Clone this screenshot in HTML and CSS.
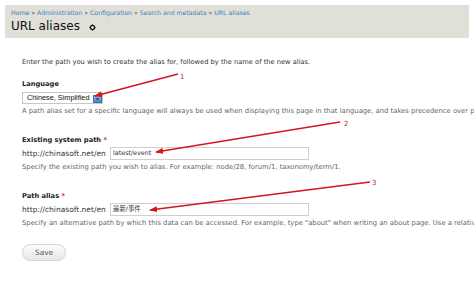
FILE: index.html
```html
<!DOCTYPE html>
<html>
<head>
    <title>URL aliases</title>
    <link rel="stylesheet" href="styles.css">
</head>
<body>
    <div class="page">
        <div class="header">
            <div class="breadcrumb">
                <a href="#">Home</a> » <a href="#">Administration</a> » <a href="#">Configuration</a> » <a href="#">Search and metadata</a> » <a href="#">URL aliases</a>
            </div>
            <h1 class="title">URL aliases
                <svg class="gear" viewBox="0 0 12 12" width="7" height="7">
                    <circle cx="6" cy="6" r="3.5" fill="none" stroke="#111" stroke-width="2.2"/>
                    <g stroke="#111" stroke-width="1.6">
                        <line x1="6" y1="0.8" x2="6" y2="2.4"/>
                        <line x1="6" y1="9.6" x2="6" y2="11.2"/>
                        <line x1="0.8" y1="6" x2="2.4" y2="6"/>
                        <line x1="9.6" y1="6" x2="11.2" y2="6"/>
                    </g>
                </svg>
            </h1>
        </div>

        <div class="content">
            <p class="intro">Enter the path you wish to create the alias for, followed by the name of the new alias.</p>

            <div class="form-item lang-item">
                <label class="label">Language</label>
                <div class="select">
                    <span class="select-text">Chinese, Simplified</span>
                    <span class="select-btn">
                        <svg viewBox="0 0 8 8" width="8" height="8"><polygon points="2,3 6,3 4,5.5" fill="#1a2a40"/></svg>
                    </span>
                </div>
                <div class="description">A path alias set for a specific language will always be used when displaying this page in that language, and takes precedence over path aliases set as neutral.</div>
            </div>

            <div class="form-item">
                <label class="label">Existing system path <span class="required">*</span></label>
                <div class="field-row">
                    <span class="prefix">http://chinasoft.net/en</span>
                    <div class="text-input">latest/event</div>
                </div>
                <div class="description">Specify the existing path you wish to alias. For example: node/28, forum/1, taxonomy/term/1.</div>
            </div>

            <div class="form-item">
                <label class="label">Path alias <span class="required">*</span></label>
                <div class="field-row">
                    <span class="prefix">http://chinasoft.net/en</span>
                    <div class="text-input cjk">最新/事件</div>
                </div>
                <div class="description">Specify an alternative path by which this data can be accessed. For example, type "about" when writing an about page. Use a relative path.</div>
            </div>

            <button class="button">Save</button>
        </div>

        <!-- 标注箭头 -->
        <svg class="annotations" width="474" height="283" viewBox="0 0 474 283">
            <defs>
                <marker id="head" markerWidth="8" markerHeight="6" refX="7" refY="3" orient="auto" markerUnits="userSpaceOnUse">
                    <polygon points="0,0 8,3 0,6" fill="#d4161e"/>
                </marker>
            </defs>
            <g stroke="#d4161e" stroke-width="1.4" marker-end="url(#head)">
                <line x1="178" y1="74" x2="95" y2="96"/>
                <line x1="340" y1="122" x2="156" y2="152"/>
                <line x1="370" y1="182" x2="150" y2="210"/>
            </g>
            <g class="num">
                <text x="180" y="79">1</text>
                <text x="344" y="126">2</text>
                <text x="372" y="185">3</text>
            </g>
        </svg>
    </div>
</body>
</html>
```

FILE: styles.css
```css
body {
    margin: 0;
    font-family: "DejaVu Sans", Verdana, sans-serif;
    background: #fff;
    overflow: hidden;
}

.page {
    position: relative;
    width: 474px;
    height: 283px;
    padding: 5px;
    box-sizing: border-box;
    overflow: hidden;
}

.header {
    background: #e0e0d8;
    padding: 3px 6px 5px;
    height: 33px;
    box-sizing: border-box;
}

.breadcrumb {
    font-size: 6.2px;
    line-height: 9px;
    color: #555;
    white-space: nowrap;
}

.breadcrumb a {
    color: #3d7fbf;
    text-decoration: none;
}

.title {
    margin: 2px 0 0;
    font-size: 12px;
    line-height: 14px;
    font-weight: normal;
    color: #111;
}

.gear {
    vertical-align: -1px;
    margin-left: 5px;
}

.content {
    padding-left: 17px;
    white-space: nowrap;
}

.intro {
    margin: 20px 0 0;
    font-size: 6.7px;
    line-height: 9px;
    color: #333;
}

.form-item {
    margin-top: 20px;
}

.lang-item {
    margin-top: 13px;
}

.label {
    display: block;
    font-size: 6.7px;
    line-height: 9px;
    font-weight: bold;
    color: #222;
}

.required {
    color: #e02020;
}

.select {
    display: flex;
    align-items: center;
    width: 81px;
    height: 12px;
    margin-top: 2.5px;
    border: 1px solid #c8c8c8;
    box-sizing: border-box;
    background: #fff;
}

.select-text {
    flex: 1;
    padding-left: 4px;
    font-family: "Liberation Sans", Arial, sans-serif;
    font-size: 7.3px;
    color: #111;
}

.select-btn {
    display: flex;
    align-items: center;
    justify-content: center;
    width: 9px;
    height: 8px;
    margin-top: 2px;
    background: linear-gradient(#8fb8e8, #4f86cc);
    border: 1px solid #3e6fae;
    box-sizing: border-box;
}

.description {
    margin-top: 3.5px;
    font-size: 6.8px;
    line-height: 9px;
    color: #666;
}

.field-row {
    display: flex;
    align-items: center;
    margin-top: 1.5px;
}

.prefix {
    width: 88px;
    font-size: 7.5px;
    color: #333;
}

.text-input {
    width: 199px;
    height: 13px;
    line-height: 11px;
    padding-left: 2px;
    border: 1px solid #cfcfcf;
    box-sizing: border-box;
    font-size: 6.4px;
    color: #333;
}

.cjk {
    font-family: "DejaVu Sans", "Noto Sans CJK SC", sans-serif;
}

.button {
    margin-top: 15.5px;
    width: 44px;
    height: 17px;
    border: 1px solid #d2d2d2;
    border-radius: 9px;
    background: linear-gradient(#fdfdfd, #e6e6e6);
    font-family: "DejaVu Sans", Verdana, sans-serif;
    font-size: 7.3px;
    color: #5a5a5a;
    padding: 0;
}

.annotations {
    position: absolute;
    top: 0;
    left: 0;
    pointer-events: none;
}

.num text {
    font-family: "DejaVu Sans", sans-serif;
    font-size: 7px;
    fill: #c4282e;
}
```
